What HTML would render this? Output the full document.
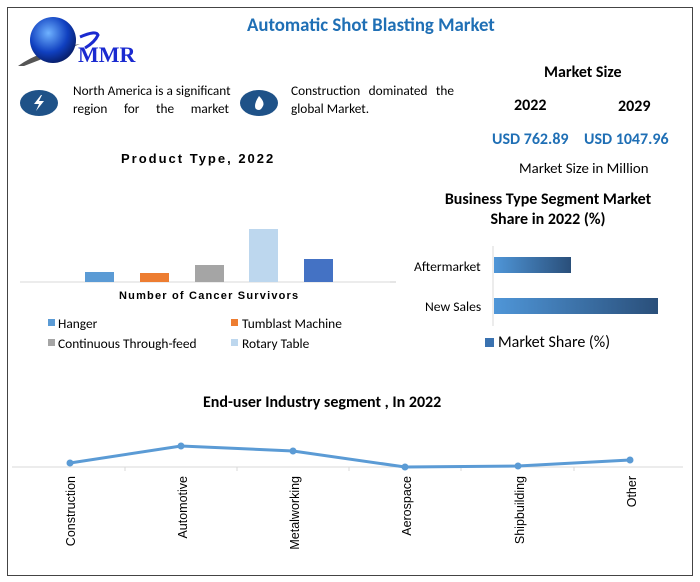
<!DOCTYPE html>
<html><head><style>
*{margin:0;padding:0}
body{width:700px;height:582px;background:#fff;position:relative;overflow:hidden;font-family:"Liberation Sans",sans-serif}
.t{position:absolute;white-space:nowrap;color:#000}
.c{font-family:Carlito,Calibri,"Liberation Sans",sans-serif}
.j{display:flex;justify-content:space-between}
</style></head><body>
<div style="position:absolute;left:7px;top:7px;width:684px;height:567px;border:1px solid #444"></div>
<svg width="700" height="582" style="position:absolute;left:0;top:0">
<defs>
<radialGradient id="g" cx="0.4" cy="0.35" r="0.7"><stop offset="0" stop-color="#6fb2ff"/><stop offset="0.6" stop-color="#1040c0"/><stop offset="1" stop-color="#061a60"/></radialGradient>
<linearGradient id="b" x1="0" x2="1"><stop offset="0" stop-color="#4f96d8"/><stop offset="1" stop-color="#2a4f7a"/></linearGradient>
</defs>
<path d="M18 66 Q40 50 80 44 Q50 56 24 66Z" fill="#555"/>
<circle cx="53" cy="40" r="23" fill="url(#g)"/>
<path d="M80 37 Q96 30 98 35 Q95 42 85 48" fill="none" stroke="#1a2ad0" stroke-width="3"/>
<text x="78" y="62" font-family="Liberation Serif,serif" font-weight="bold" font-size="22" fill="#1a2ad0">MMR</text>
<ellipse cx="39" cy="103" rx="19" ry="13" fill="#1f5288"/>
<path d="M41 95 L34 104 L39 104 L36 111 L44 101 L39 101 L42 95Z" fill="#fff"/>
<ellipse cx="259" cy="103" rx="19" ry="13" fill="#1f5288"/>
<path d="M259 96 Q265 102 263 106 Q261 110 259 110 Q255 110 255 106 Q255 102 259 96Z" fill="#fff"/>
<line x1="20" y1="282" x2="396" y2="282" stroke="#d9d9d9"/>
<rect x="85" y="272" width="29" height="10" fill="#5b9bd5"/>
<rect x="140" y="273" width="29" height="9" fill="#ed7d31"/>
<rect x="195" y="265" width="29" height="17" fill="#a5a5a5"/>
<rect x="249" y="229" width="29" height="53" fill="#bdd7ee"/>
<rect x="304" y="259" width="29" height="23" fill="#4472c4"/>
<rect x="48" y="319" width="7" height="7" fill="#5b9bd5"/>
<rect x="231" y="319" width="7" height="7" fill="#ed7d31"/>
<rect x="48" y="339" width="7" height="7" fill="#a5a5a5"/>
<rect x="231" y="339" width="7" height="7" fill="#bdd7ee"/>
<line x1="390" y1="282" x2="396" y2="282" stroke="#ccc"/>
<line x1="493" y1="246" x2="493" y2="326" stroke="#d9d9d9"/>
<rect x="494" y="257" width="77" height="16" fill="url(#b)"/>
<rect x="494" y="298" width="164" height="16" fill="url(#b)"/>
<rect x="485" y="338" width="9" height="9" fill="#3a72b0"/>
<line x1="12" y1="467" x2="683" y2="467" stroke="#d9d9d9"/>
<g stroke="#d9d9d9"><line x1="125" y1="467" x2="125" y2="471"/><line x1="237" y1="467" x2="237" y2="471"/><line x1="349" y1="467" x2="349" y2="471"/><line x1="461" y1="467" x2="461" y2="471"/><line x1="574" y1="467" x2="574" y2="471"/></g>
<polyline points="70,463 181,446 293,451 405,467 518,466 630,460" fill="none" stroke="#5b9bd5" stroke-width="3"/>
<g fill="#5b9bd5"><circle cx="70" cy="463" r="3.5"/><circle cx="181" cy="446" r="3.5"/><circle cx="293" cy="451" r="3.5"/><circle cx="405" cy="467" r="3.5"/><circle cx="518" cy="466" r="3.5"/><circle cx="630" cy="460" r="3.5"/></g>
<g font-family="Liberation Sans,sans-serif" font-size="12.5" fill="#000" text-anchor="end">
<text transform="translate(75,476) rotate(-90)">Construction</text>
<text transform="translate(187,476) rotate(-90)">Automotive</text>
<text transform="translate(299,476) rotate(-90)">Metalworking</text>
<text transform="translate(411,476) rotate(-90)">Aerospace</text>
<text transform="translate(524,476) rotate(-90)">Shipbuilding</text>
<text transform="translate(636,476) rotate(-90)">Other</text>
</g>
</svg>
<div class="t c" style="left:247px;top:14px;font-size:18.8px;font-weight:bold;color:#1f6fb5">Automatic Shot Blasting Market</div>
<div class="t c j" style="left:73px;top:82px;font-size:13.3px;width:156px"><span>North America is a significant</span></div>
<div class="t c j" style="left:73px;top:100px;font-size:13.3px;width:156px"><span>region</span><span>for</span><span>the</span><span>market</span></div>
<div class="t c j" style="left:291px;top:82px;font-size:13.3px;width:163px"><span>Construction</span><span>dominated</span><span>the</span></div>
<div class="t c" style="left:291px;top:100px;font-size:13.3px">global Market.</div>
<div class="t c" style="left:544px;top:63px;font-size:16px;font-weight:bold">Market Size</div>
<div class="t c" style="left:514px;top:96px;font-size:16px;font-weight:bold">2022</div>
<div class="t c" style="left:618px;top:97px;font-size:16px;font-weight:bold">2029</div>
<div class="t c" style="left:492px;top:130px;font-size:16px;font-weight:bold;color:#1f6fb5">USD 762.89</div>
<div class="t c" style="left:584px;top:130px;font-size:16px;font-weight:bold;color:#1f6fb5">USD 1047.96</div>
<div class="t c" style="left:519px;top:159px;font-size:14.8px">Market Size in Million</div>
<div class="t" style="left:121px;top:151px;font-size:13px;font-weight:bold;letter-spacing:2px">Product Type, 2022</div>
<div class="t" style="left:119px;top:290px;font-size:11px;font-weight:bold;letter-spacing:1.2px">Number of Cancer Survivors</div>
<div class="t c" style="left:58px;top:315px;font-size:13.4px">Hanger</div>
<div class="t c" style="left:242px;top:315px;font-size:13.4px">Tumblast Machine</div>
<div class="t c" style="left:58px;top:335px;font-size:13.4px">Continuous Through-feed</div>
<div class="t c" style="left:242px;top:335px;font-size:13.4px">Rotary Table</div>
<div class="t c" style="left:434px;top:190px;width:228px;white-space:normal;text-align:center;font-size:16px;font-weight:bold;line-height:20px">Business Type Segment Market Share in 2022 (%)</div>
<div class="t c" style="left:414px;top:258px;font-size:13.6px">Aftermarket</div>
<div class="t c" style="left:425px;top:298px;font-size:13.6px">New Sales</div>
<div class="t c" style="left:498px;top:333px;font-size:16px">Market Share (%)</div>
<div class="t c" style="left:203px;top:393px;font-size:16px;font-weight:bold">End-user Industry segment , In 2022</div>
</body></html>
